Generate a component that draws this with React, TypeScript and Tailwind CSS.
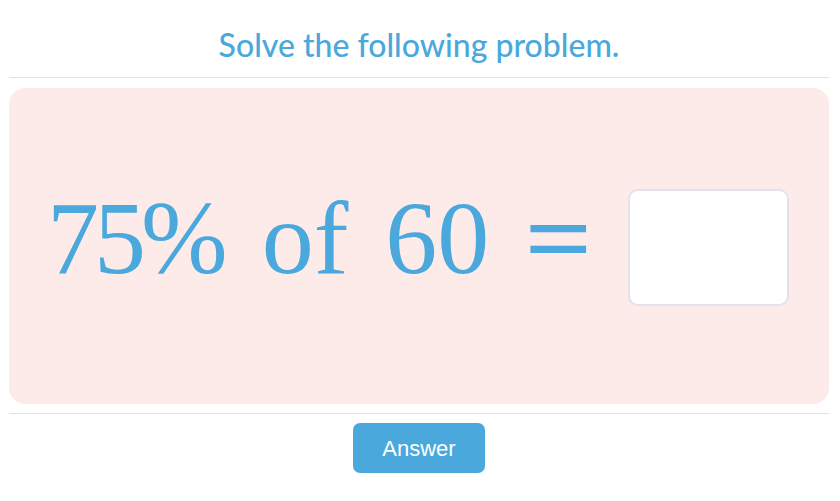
export default function App() {
  return (
    <div className="h-[501px] w-[840px] bg-white">
      <div className="flex flex-col px-[9px] pr-[11px]">
        <div className="flex h-[78px] items-center justify-center border-b border-[#e2e2e2] pt-[12px]">
          <h1 className="font-['Lato',sans-serif] text-[32px] font-medium text-[#4aa8dc]">
            Solve the following problem.
          </h1>
        </div>
        <div className="mt-[10px] flex h-[316px] items-center rounded-[16px] bg-[#fdebea] pl-[38px]">
          <div className="mb-[16px] flex items-baseline font-['Liberation_Serif',serif] text-[104px] leading-none text-[#4aa8dc]">
            <span className="tracking-[-5px]">75%</span>
            <span className="ml-[39px]">of</span>
            <span className="ml-[37px]">60</span>
            <span className="ml-[40px] inline-block scale-x-[1.15] font-bold">=</span>
          </div>
          <div className="ml-[39px] mt-[3px] h-[117px] w-[161px] rounded-[10px] border-2 border-[#e1e3ea] bg-white" />
        </div>
        <div className="mt-[9px] flex justify-center border-t border-[#e2e2e2] pt-[9px]">
          <button className="h-[50px] w-[132px] rounded-[7px] bg-[#4aa8dc] font-['Liberation_Sans',sans-serif] text-[22px] text-white">
            Answer
          </button>
        </div>
      </div>
    </div>
  );
}
